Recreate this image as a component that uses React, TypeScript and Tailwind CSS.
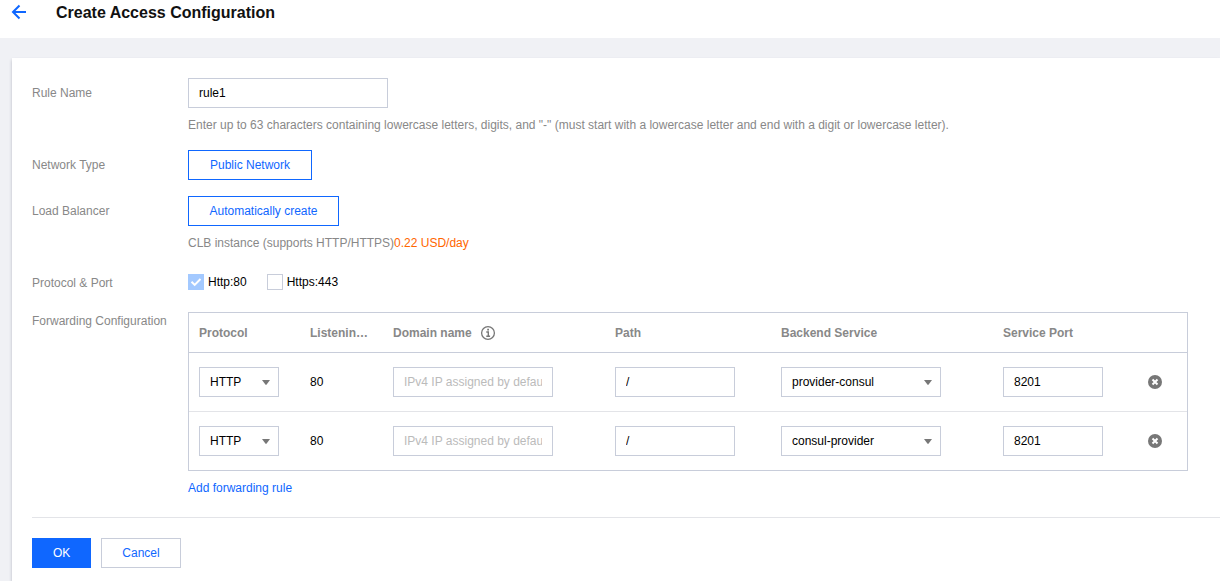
import { useState } from 'react';

interface ForwardingRule {
  id: number;
  protocol: string;
  listeningPort: number;
  domain: string;
  path: string;
  service: string;
  servicePort: string;
}

const initialRules: ForwardingRule[] = [
  { id: 1, protocol: 'HTTP', listeningPort: 80, domain: '', path: '/', service: 'provider-consul', servicePort: '8201' },
  { id: 2, protocol: 'HTTP', listeningPort: 80, domain: '', path: '/', service: 'consul-provider', servicePort: '8201' },
];

const inputClass =
  'block h-[30px] border border-[#c8cdda] bg-white px-2.5 text-xs text-black outline-none placeholder:text-[#bbb] focus:border-[#0f67ff]';

function Row({ label, htmlFor, children, compact }: {
  label: string;
  htmlFor?: string;
  children: React.ReactNode;
  compact?: boolean;
}) {
  return (
    <div className="flex">
      <label
        htmlFor={htmlFor}
        className={compact ? 'w-[156px] shrink-0 leading-[18px] text-[#888]' : 'w-[156px] shrink-0 leading-[30px] text-[#888]'}
      >
        {label}
      </label>
      <div className="min-w-0 flex-1">{children}</div>
    </div>
  );
}

function Select({ label, value, options, className }: {
  label: string;
  value: string;
  options: string[];
  className: string;
}) {
  return (
    <div className={`relative ${className}`}>
      <select
        aria-label={label}
        defaultValue={value}
        className="block h-[30px] w-full appearance-none border border-[#c8cdda] bg-white pr-6 pl-2.5 text-xs text-black outline-none"
      >
        {options.map((option) => (
          <option key={option}>{option}</option>
        ))}
      </select>
      <svg className="pointer-events-none absolute top-3 right-2 h-2 w-2.5" viewBox="0 0 10 8" fill="#777">
        <path d="M1 1h8L5.6 5.6a.8.8 0 0 1-1.2 0z" />
      </svg>
    </div>
  );
}

function Checkbox({ label, checked, disabled }: { label: string; checked?: boolean; disabled?: boolean }) {
  return (
    <label className="flex items-center gap-1 text-black">
      <span className="relative block h-4 w-4">
        <input
          type="checkbox"
          defaultChecked={checked}
          disabled={disabled}
          className="peer block h-4 w-4 appearance-none border border-[#c8cdda] bg-white checked:border-[#a3c9ff] checked:bg-[#a3c9ff]"
        />
        <svg
          className="pointer-events-none absolute inset-0 hidden h-4 w-4 peer-checked:block"
          viewBox="0 0 16 16"
          fill="none"
          stroke="#fff"
          strokeWidth="2"
        >
          <path d="M3.5 7.7l3.2 3.2 5.8-5.9" />
        </svg>
      </span>
      {label}
    </label>
  );
}

export default function App() {
  const [rules, setRules] = useState(initialRules);

  const addRule = () => {
    setRules([
      ...rules,
      { id: Date.now(), protocol: 'HTTP', listeningPort: 80, domain: '', path: '/', service: 'provider-consul', servicePort: '8201' },
    ]);
  };

  const removeRule = (id: number) => setRules(rules.filter((rule) => rule.id !== id));

  return (
    <div className="flex min-h-screen flex-col bg-[#f0f1f5] font-['Liberation_Sans',Arial,sans-serif] text-xs leading-[18px]">
      {/* Header */}
      <header className="flex items-start gap-7 bg-white pb-3 pl-2.5">
        <button type="button" aria-label="Back" className="flex h-6 w-[18px] items-center">
          <svg className="h-4 w-[18px]" viewBox="0 0 18 16" fill="none" stroke="#0f67ff" strokeWidth="2">
            <path d="M3 8h13M9.5 1.5L3 8l6.5 6.5" />
          </svg>
        </button>
        <h1 className="text-base leading-[26px] font-bold text-[#111]">Create Access Configuration</h1>
      </header>

      {/* Form card */}
      <main className="mt-5 ml-3 flex-1 bg-white pt-5 pb-3 pl-5 shadow-[0_2px_3px_rgba(54,58,80,0.3)]">
        <form onSubmit={(e) => e.preventDefault()}>
          <div className="flex flex-col gap-4 pr-8">
            <Row label="Rule Name" htmlFor="rule-name">
              <input id="rule-name" type="text" defaultValue="rule1" className={`${inputClass} w-[200px]`} />
              <p className="mt-2 text-[#888]">
                Enter up to 63 characters containing lowercase letters, digits, and "-" (must start with a lowercase letter and end with a digit or lowercase letter).
              </p>
            </Row>

            <Row label="Network Type" htmlFor="network-type">
              <button id="network-type" type="button" className="block h-[30px] min-w-[124px] border border-[#0f67ff] px-5 text-[#0f67ff]">
                Public Network
              </button>
            </Row>

            <Row label="Load Balancer" htmlFor="load-balancer">
              <button id="load-balancer" type="button" className="block h-[30px] min-w-[151px] border border-[#0f67ff] px-5 text-[#0f67ff]">
                Automatically create
              </button>
              <p className="mt-2 text-[#888]">
                CLB instance (supports HTTP/HTTPS)<span className="text-[#ff6600]">0.22 USD/day</span>
              </p>
            </Row>

            <div className="-mb-0.5">
              <Row label="Protocol & Port">
                <div className="flex h-7 items-center gap-5">
                  <Checkbox label="Http:80" checked disabled />
                  <Checkbox label="Https:443" />
                </div>
              </Row>
            </div>

            <Row label="Forwarding Configuration" compact>
              <div className="max-w-[1000px] border border-[#c8cdda]">
                <table className="w-full table-fixed border-separate border-spacing-0 text-left">
                  <colgroup>
                    <col className="w-[111px]" />
                    <col className="w-[83px]" />
                    <col className="w-[222px]" />
                    <col className="w-[166px]" />
                    <col className="w-[222px]" />
                    <col className="w-[145px]" />
                    <col />
                  </colgroup>
                  <thead>
                    <tr className="text-[#888] [&>th]:h-10 [&>th]:border-b [&>th]:border-[#c8cdda] [&>th]:px-2.5">
                      <th>Protocol</th>
                      <th className="truncate">Listening Port</th>
                      <th>
                        <span className="flex items-center gap-2">
                          Domain name
                          <svg className="h-4 w-4" viewBox="0 0 16 16" fill="none" stroke="#777">
                            <circle cx="8" cy="8" r="6.4" strokeWidth="1.3" />
                            <path d="M6.3 7h2v4M6.3 11.3h3.8" strokeWidth="1.4" />
                            <path d="M7.2 4.6h1.8" strokeWidth="1.6" />
                          </svg>
                        </span>
                      </th>
                      <th>Path</th>
                      <th>Backend Service</th>
                      <th>Service Port</th>
                      <th aria-label="Actions" />
                    </tr>
                  </thead>
                  <tbody className="[&>tr:not(:last-child)>td]:border-b [&>tr:not(:last-child)>td]:border-[#e3e4e8]">
                    {rules.map((rule) => (
                      <tr key={rule.id} className="[&>td]:px-2.5 [&>td]:py-3.5">
                        <td>
                          <Select label="Protocol" value={rule.protocol} options={['HTTP', 'HTTPS']} className="w-20" />
                        </td>
                        <td className="text-black">{rule.listeningPort}</td>
                        <td>
                          <input
                            type="text"
                            aria-label="Domain name"
                            placeholder="IPv4 IP assigned by default"
                            defaultValue={rule.domain}
                            className={`${inputClass} w-40`}
                          />
                        </td>
                        <td>
                          <input type="text" aria-label="Path" defaultValue={rule.path} className={`${inputClass} w-[120px]`} />
                        </td>
                        <td>
                          <Select
                            label="Backend Service"
                            value={rule.service}
                            options={['provider-consul', 'consul-provider']}
                            className="w-40"
                          />
                        </td>
                        <td>
                          <input type="text" aria-label="Service Port" defaultValue={rule.servicePort} className={`${inputClass} w-[100px]`} />
                        </td>
                        <td>
                          <button type="button" aria-label="Remove rule" onClick={() => removeRule(rule.id)} className="block">
                            <svg className="h-3.5 w-3.5" viewBox="0 0 14 14">
                              <circle cx="7" cy="7" r="7" fill="#777" />
                              <path d="M4.5 4.5l5 5M9.5 4.5l-5 5" stroke="#fff" strokeWidth="2" />
                            </svg>
                          </button>
                        </td>
                      </tr>
                    ))}
                  </tbody>
                </table>
              </div>
              <button type="button" onClick={addRule} className="mt-2 block text-[#0f67ff]">
                Add forwarding rule
              </button>
            </Row>
          </div>

          {/* Footer */}
          <div className="mt-5 flex gap-2.5 border-t border-[#e3e4e8] pt-5">
            <button type="submit" className="h-[30px] border border-[#0f67ff] bg-[#0f67ff] px-5 text-white">
              OK
            </button>
            <button type="button" className="h-[30px] border border-[#c8cdda] bg-white px-5 text-[#0f67ff]">
              Cancel
            </button>
          </div>
        </form>
      </main>
    </div>
  );
}
